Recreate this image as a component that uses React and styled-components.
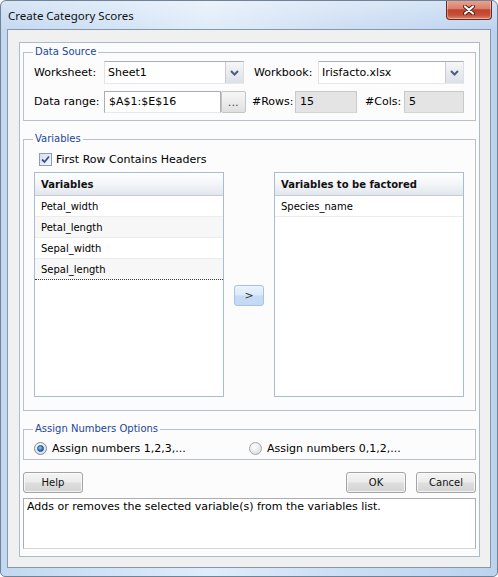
import React from 'react';
import styled, { createGlobalStyle } from 'styled-components';

const Global = createGlobalStyle`
  html, body { margin: 0; padding: 0; background: #fff; }
  body { width: 498px; height: 577px; overflow: hidden; }
  * { box-sizing: border-box; }
`;

const VERDANA = `"DejaVu Sans", Verdana, sans-serif`;

const Window = styled.div`
  width: 498px;
  height: 577px;
  display: flex;
  flex-direction: column;
  border: 1px solid #6f8298;
  border-radius: 6px 6px 5px 5px;
  background:
    linear-gradient(180deg, rgba(255,255,255,0.35), rgba(255,255,255,0) 30px),
    linear-gradient(90deg, #c3d8f0 0%, #d3e4f6 25%, #e0ecf9 42%, #cfe0f4 65%, #bcd3ee 100%);
  font-family: ${VERDANA};
  font-size: 11px;
  color: #000;
  overflow: hidden;
`;

const TitleBar = styled.div`
  height: 28px;
  flex: none;
  display: flex;
  align-items: center;
  justify-content: space-between;
  padding: 0 5px 0 7px;
`;

const Title = styled.div`
  font-family: "Noto Sans", "Liberation Sans", sans-serif;
  font-size: 11.5px;
  color: #111;
`;

const CloseButton = styled.div`
  align-self: flex-start;
  margin-top: -1px;
  width: 46px;
  height: 20px;
  border: 1px solid #6a2a20;
  border-top: none;
  border-radius: 0 0 4px 4px;
  background: linear-gradient(180deg, #eaa593 0%, #d9806d 45%, #c2412c 52%, #c8503a 80%, #da8a6e 100%);
  box-shadow: inset 0 0 0 1px rgba(255,255,255,0.35);
  display: flex;
  align-items: center;
  justify-content: center;
`;

const Client = styled.div`
  flex: 1;
  margin: 0 6px 8px 6px;
  border: 1px solid #8497ad;
  background: #f0f0f0;
  padding: 12px 10px 10px 11px;
  display: flex;
`;

const Panel = styled.div`
  flex: 1;
  border: 1px solid #aabbce;
  background: #fcfcfc;
  padding: 3px 3px 6px 3px;
  display: flex;
  flex-direction: column;
  gap: 12px;
`;

const Group = styled.fieldset`
  margin: 0;
  min-width: 0;
  border: 1px solid #b8c0c9;
  padding: ${p => p.$pad};
  display: flex;
  flex-direction: column;
  gap: ${p => p.$gap || 0}px;
`;

const Legend = styled.legend`
  padding: 0 2px;
  margin-left: -1px;
  font-family: ${VERDANA};
  font-size: 10px;
  line-height: 12px;
  color: #22479a;
`;

const FormRow = styled.div`
  height: 23px;
  display: flex;
  align-items: center;
`;

const Label = styled.span`
  width: ${p => p.$w}px;
  margin-left: ${p => p.$ml || 0}px;
  flex: none;
  white-space: nowrap;
`;

const SelectBox = styled.div`
  width: ${p => p.$w}px;
  height: 23px;
  flex: none;
  display: flex;
  border: 1px solid #abadb3;
  border-left-color: #e2e3ea;
  border-right-color: #dbdfe6;
  border-bottom-color: #e3e9ef;
  background: #fff;
`;

const SelectValue = styled.div`
  flex: 1;
  display: flex;
  align-items: center;
  padding-left: 3px;
`;

const DropButton = styled.div`
  width: 18px;
  flex: none;
  display: flex;
  align-items: center;
  justify-content: center;
  border-left: 1px solid #c9cdd3;
  background: linear-gradient(180deg, #f7f7f7, #e9ebee 50%, #dde0e5);
`;

const TextInput = styled.div`
  width: ${p => p.$w}px;
  height: 22px;
  flex: none;
  display: flex;
  align-items: center;
  padding-left: 4px;
  border: 1px solid ${p => (p.$disabled ? '#c9c9c9' : '#abadb3')};
  border-bottom-color: ${p => (p.$disabled ? '#d4d4d4' : '#e3e9ef')};
  background: ${p => (p.$disabled ? '#e4e4e4' : '#fff')};
`;

const EllipsisButton = styled.div`
  width: 25px;
  height: 22px;
  flex: none;
  margin-right: ${p => p.$mr}px;
  display: flex;
  align-items: flex-end;
  justify-content: center;
  padding-bottom: 4px;
  border: 1px solid #c5c5c5;
  border-radius: 2px;
  background: linear-gradient(180deg, #f6f6f6, #ececec 50%, #e0e0e0);
  font-size: 10px;
  color: #333;
  letter-spacing: 0.5px;
`;

const CheckRow = styled.label`
  height: 16px;
  display: flex;
  align-items: center;
  gap: 4px;
  padding-left: 5px;
`;

const CheckBox = styled.span`
  width: 13px;
  height: 13px;
  flex: none;
  border: 1px solid #8e9bb0;
  background: linear-gradient(135deg, #d6e0f0, #f5f8fc);
  display: flex;
  align-items: center;
  justify-content: center;
`;

const ListsGrid = styled.div`
  display: grid;
  grid-template-columns: 190px 1fr 190px;
`;

const List = styled.div`
  height: 225px;
  border: 1px solid #a6bcd7;
  background: #fff;
  display: flex;
  flex-direction: column;
`;

const ListHeader = styled.div`
  height: 23px;
  flex: none;
  display: flex;
  align-items: center;
  padding-left: 6px;
  border-bottom: 1px solid #c3ccd8;
  background: linear-gradient(180deg, #ffffff 0%, #f3f5f8 50%, #e2e6ec 100%);
  font-family: ${VERDANA};
  font-weight: bold;
  font-size: 10px;
  color: #111;
`;

const ListRow = styled.div`
  height: 21px;
  flex: none;
  display: flex;
  align-items: center;
  padding-left: 6px;
  border-bottom: 1px ${p => (p.$focus ? 'dotted #3a3a3a' : 'solid #ececec')};
  background: ${p => (p.$alt ? '#f7f7f7' : '#fff')};
  font-size: 10px;
`;

const MoveButton = styled.div`
  justify-self: center;
  align-self: start;
  margin-top: 113px;
  width: 30px;
  height: 21px;
  border: 1px solid #a9c2e2;
  border-radius: 3px;
  background: linear-gradient(180deg, #eaf3fd 0%, #dbe9f9 48%, #c6dbf4 52%, #c4d9f3 100%);
  display: flex;
  align-items: center;
  justify-content: center;
  font-size: 11px;
  color: #333;
`;

const RadioRow = styled.div`
  height: 16px;
  display: flex;
  align-items: center;
`;

const RadioOption = styled.label`
  width: ${p => p.$w || 'auto'};
  display: flex;
  align-items: center;
  gap: 5px;
  white-space: nowrap;
`;

const RadioCircle = styled.span`
  width: 13px;
  height: 13px;
  flex: none;
  border-radius: 50%;
  border: 1px solid ${p => (p.$on ? '#7d8a98' : '#a2a8ae')};
  background: radial-gradient(circle at 40% 35%, #ffffff, #e4e6e8 60%, #d2d5d8);
  display: flex;
  align-items: center;
  justify-content: center;
`;

const RadioDot = styled.span`
  width: 7px;
  height: 7px;
  border-radius: 50%;
  border: 1px solid #1d4f86;
  background: radial-gradient(circle at 40% 35%, #8fd0ff, #2a7dd2 55%, #124a8a);
`;

const ButtonBar = styled.div`
  display: flex;
  align-items: center;
  gap: 10px;
  margin-bottom: -7px;
`;

const PushButton = styled.div`
  width: 60px;
  height: 21px;
  margin-right: ${p => (p.$push ? 'auto' : '0')};
  border: 1px solid #a3a3a3;
  border-radius: 3px;
  background: linear-gradient(180deg, #f4f4f4 0%, #ececec 48%, #dedede 52%, #d4d4d4 100%);
  box-shadow: inset 0 0 0 1px rgba(255,255,255,0.7);
  display: flex;
  align-items: center;
  justify-content: center;
  font-size: 10px;
  color: #111;
`;

const MessageBox = styled.div`
  height: 51px;
  border: 1px solid #abadb3;
  border-bottom-color: #d3d6dc;
  background: #fff;
  padding: 1px 3px;
  line-height: 14px;
`;

const Chevron = () => (
  <svg width="9" height="6" viewBox="0 0 9 6">
    <path d="M1 1 L4.5 4.5 L8 1" fill="none" stroke="#4a5d86" strokeWidth="2" />
  </svg>
);

const CloseX = () => (
  <svg width="12" height="10" viewBox="0 0 12 10">
    <path d="M2 1.5 L10 8.5 M10 1.5 L2 8.5" stroke="#4a1d15" strokeWidth="4" strokeLinecap="round" />
    <path d="M2 1.5 L10 8.5 M10 1.5 L2 8.5" stroke="#ffffff" strokeWidth="2.2" strokeLinecap="round" />
  </svg>
);

const Check = () => (
  <svg width="9" height="9" viewBox="0 0 9 9">
    <path d="M1 4.5 L3.5 7 L8 1.5" fill="none" stroke="#3d4f93" strokeWidth="1.8" />
  </svg>
);

const Select = ({ w, value }) => (
  <SelectBox $w={w}>
    <SelectValue>{value}</SelectValue>
    <DropButton><Chevron /></DropButton>
  </SelectBox>
);

const Radio = ({ on, label, w }) => (
  <RadioOption $w={w}>
    <RadioCircle $on={on}>{on && <RadioDot />}</RadioCircle>
    {label}
  </RadioOption>
);

const leftVars = ['Petal_width', 'Petal_length', 'Sepal_width', 'Sepal_length'];

export default function App() {
  return (
    <>
      <Global />
      <Window>
        <TitleBar>
          <Title>Create Category Scores</Title>
          <CloseButton><CloseX /></CloseButton>
        </TitleBar>
        <Client>
          <Panel>
            <Group $pad="3px 11px 7px 10px" $gap={6}>
              <Legend>Data Source</Legend>
              <FormRow>
                <Label $w={70}>Worksheet:</Label>
                <Select w={140} value="Sheet1" />
                <Label $w={64} $ml={10}>Workbook:</Label>
                <Select w={146} value="Irisfacto.xlsx" />
              </FormRow>
              <FormRow>
                <Label $w={70}>Data range:</Label>
                <TextInput $w={117}>$A$1:$E$16</TextInput>
                <EllipsisButton $mr={6}>...</EllipsisButton>
                <Label $w={43}>#Rows:</Label>
                <TextInput $w={62} $disabled>15</TextInput>
                <Label $w={39} $ml={8}>#Cols:</Label>
                <TextInput $w={60} $disabled>5</TextInput>
              </FormRow>
            </Group>

            <Group $pad="6px 11px 13px 10px" $gap={5}>
              <Legend>Variables</Legend>
              <CheckRow>
                <CheckBox><Check /></CheckBox>
                First Row Contains Headers
              </CheckRow>
              <ListsGrid>
                <List>
                  <ListHeader>Variables</ListHeader>
                  {leftVars.map((v, i) => (
                    <ListRow key={v} $alt={i % 2 === 1} $focus={i === leftVars.length - 1}>{v}</ListRow>
                  ))}
                </List>
                <MoveButton>&gt;</MoveButton>
                <List>
                  <ListHeader>Variables to be factored</ListHeader>
                  <ListRow>Species_name</ListRow>
                </List>
              </ListsGrid>
            </Group>

            <Group $pad="5px 11px 3px 10px">
              <Legend>Assign Numbers Options</Legend>
              <RadioRow>
                <Radio on w="215px" label="Assign numbers 1,2,3,..." />
                <Radio label="Assign numbers 0,1,2,..." />
              </RadioRow>
            </Group>

            <ButtonBar>
              <PushButton $push>Help</PushButton>
              <PushButton>OK</PushButton>
              <PushButton>Cancel</PushButton>
            </ButtonBar>

            <MessageBox>Adds or removes the selected variable(s) from the variables list.</MessageBox>
          </Panel>
        </Client>
      </Window>
    </>
  );
}
